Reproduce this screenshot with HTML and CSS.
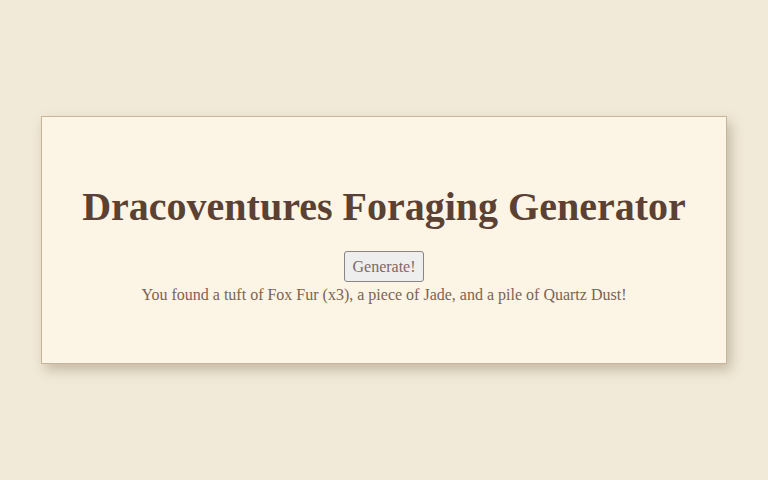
FILE: index.html
```html
<!DOCTYPE html>
<html lang="en">
<head>
    <meta charset="UTF-8">
    <meta name="viewport" content="width=device-width, initial-scale=1.0">
    <title>Dracoventures Foraging Generator</title>
    <link rel="stylesheet" href="styles.css">
</head>
<body>
    <div class="container">
        <h1>Dracoventures Foraging Generator</h1>
        <button id="generate">Generate!</button>
        <p id="result">You found a tuft of Fox Fur (x3), a piece of Jade, and a pile of Quartz Dust!</p>
    </div>
</body>
</html>
```

FILE: styles.css
```css
html, body {
    height: 100%;
}
body {
    margin: 0;
    font-family: 'Liberation Serif', serif;
    background: #f2ead8;
    display: flex;
    align-items: center;
    justify-content: center;
}
.container {
    width: 684px;
    height: 180px;
    padding-top: 66px;
    box-sizing: content-box;
    background: #fcf4e4;
    border: 1px solid #c8b49a;
    box-shadow: 4px 6px 12px rgba(90, 70, 40, 0.3);
    display: flex;
    flex-direction: column;
    align-items: center;
    text-align: center;
}
h1 {
    margin: 0 0 21px;
    font-size: 40px;
    color: #5b4133;
}
button {
    font-family: 'Liberation Serif', serif;
    font-size: 16px;
    color: #7a6a66;
    background: #efeeee;
    border: 1px solid #8a8484;
    border-radius: 3px;
    padding: 6px 7px 5px;
}
p {
    margin: 4px 0 0;
    font-size: 16px;
    color: #7a6454;
}
```
